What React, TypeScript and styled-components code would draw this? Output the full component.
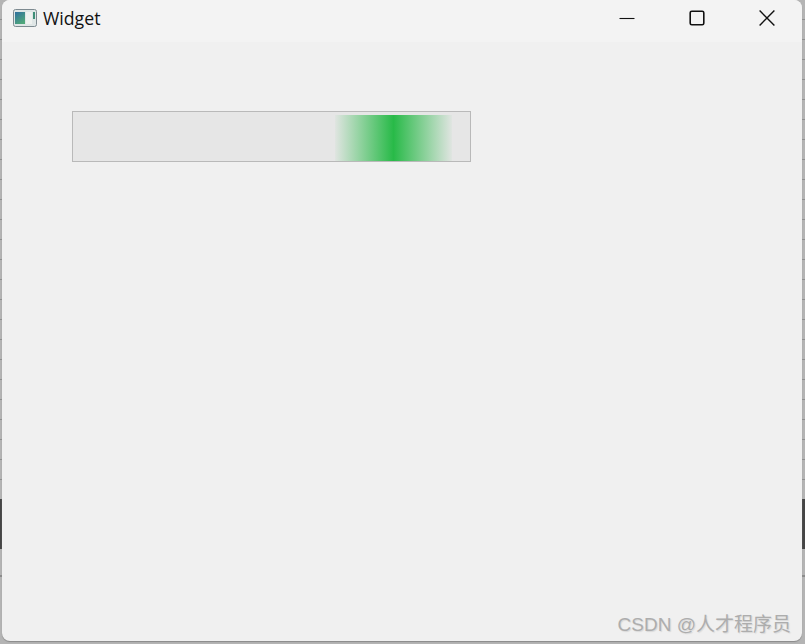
import React from 'react';
import styled, { createGlobalStyle } from 'styled-components';

const GlobalStyle = createGlobalStyle`
  html, body {
    margin: 0;
    padding: 0;
    height: 100%;
    overflow: hidden;
  }
  #root {
    height: 100%;
  }
`;

const AppIcon = () => (
  <svg width='24' height='18' viewBox='0 0 24 18'>
    <defs>
      <linearGradient id='pane' x1='0' y1='0' x2='0.6' y2='1'>
        <stop offset='0' stopColor='#2f6f9f' />
        <stop offset='1' stopColor='#4fa77a' />
      </linearGradient>
    </defs>
    <rect x='0.5' y='0.5' width='23' height='17' rx='2' fill='#dfe6e6' stroke='#7d8a90' />
    <rect x='2' y='3' width='10' height='12' fill='url(#pane)' />
    <rect x='13' y='3' width='6' height='12' fill='#eef1ef' />
    <rect x='20' y='3' width='2' height='7' fill='#3f8f78' />
  </svg>
);

const MinimizeIcon = () => (
  <svg width='16' height='16' viewBox='0 0 16 16'>
    <path d='M0.5 8.5H15.5' stroke='#111' strokeWidth='1.1' fill='none' />
  </svg>
);

const MaximizeIcon = () => (
  <svg width='16' height='16' viewBox='0 0 16 16'>
    <rect x='1.2' y='1.2' width='13.6' height='13.6' rx='1.6' stroke='#111' strokeWidth='1.6' fill='none' />
  </svg>
);

const CloseIcon = () => (
  <svg width='16' height='16' viewBox='0 0 16 16'>
    <path d='M0.6 0.6L15.4 15.4M15.4 0.6L0.6 15.4' stroke='#111' strokeWidth='1.4' fill='none' />
  </svg>
);

const ProgressBar = ({ offset, chunkWidth }: { offset: number; chunkWidth: number }) => (
  <Track>
    <Chunk $offset={offset} $width={chunkWidth} />
  </Track>
);

const App = () => {
  return (
    <>
      <GlobalStyle />
      <Desktop>
        <Window>
          <TitleBar>
            <TitleIcon>
              <AppIcon />
            </TitleIcon>
            <Title>Widget</Title>
            <Controls>
              <ControlButton>
                <MinimizeIcon />
              </ControlButton>
              <ControlButton>
                <MaximizeIcon />
              </ControlButton>
              <ControlButton>
                <CloseIcon />
              </ControlButton>
            </Controls>
          </TitleBar>
          <Content>
            <ProgressBar offset={262} chunkWidth={117} />
            <Watermark>CSDN @人才程序员</Watermark>
          </Content>
        </Window>
      </Desktop>
    </>
  );
};

const Desktop = styled.div`
  box-sizing: border-box;
  width: 805px;
  height: 644px;
  padding: 0 3px 3px 2px;
  background:
    linear-gradient(#454545, #454545) 0 499px / 100% 50px no-repeat,
    linear-gradient(#8c8c8c, #8c8c8c) 0 575px / 100% 2px no-repeat,
    repeating-linear-gradient(
      to bottom,
      #8f8f8f 0,
      #8f8f8f 1px,
      #b4b4b4 1px,
      #b4b4b4 20px
    ) 0 -1px / 100% 520px no-repeat,
    #b4b4b4;
`;

const Window = styled.div`
  display: flex;
  flex-direction: column;
  height: 100%;
  overflow: hidden;
  border-radius: 8px;
  background: #f0f0f0;
  box-shadow: 0 1px 1px #8a8a8a;
  font-family: 'Open Sans', 'Noto Sans', sans-serif;
`;

const TitleBar = styled.div`
  display: flex;
  align-items: center;
  flex: none;
  height: 42px;
  padding-left: 11px;
  padding-bottom: 6px;
  box-sizing: border-box;
  background: #f3f3f3;
`;

const TitleIcon = styled.div`
  display: flex;
  width: 24px;
  height: 18px;
  margin-right: 6px;
`;

const Title = styled.span`
  flex: 1;
  font-size: 17.7px;
  color: #111;
`;

const Controls = styled.div`
  display: flex;
  align-self: stretch;
`;

const ControlButton = styled.div`
  display: flex;
  align-items: center;
  justify-content: center;
  width: 70px;
`;

const Content = styled.div`
  position: relative;
  flex: 1;
  padding: 69px 0 0 70px;
`;

const Track = styled.div`
  display: flex;
  box-sizing: border-box;
  width: 399px;
  height: 51px;
  padding-top: 3px;
  border: 1px solid #b9b9b9;
  background: #e6e6e6;
`;

const Chunk = styled.div<{ $offset: number; $width: number }>`
  width: ${p => p.$width}px;
  margin-left: ${p => p.$offset}px;
  background: linear-gradient(
    to right,
    rgba(40, 186, 72, 0.03) 0%,
    rgba(40, 186, 72, 1) 50%,
    rgba(40, 186, 72, 0.03) 100%
  );
`;

const Watermark = styled.span`
  position: absolute;
  right: 11px;
  bottom: 4px;
  font-family: 'Liberation Sans', 'Noto Sans CJK SC', sans-serif;
  font-size: 19px;
  line-height: 24px;
  color: #adadad;
  text-shadow: 1px 1px 1px #d8d8d8;
`;

export default App;
